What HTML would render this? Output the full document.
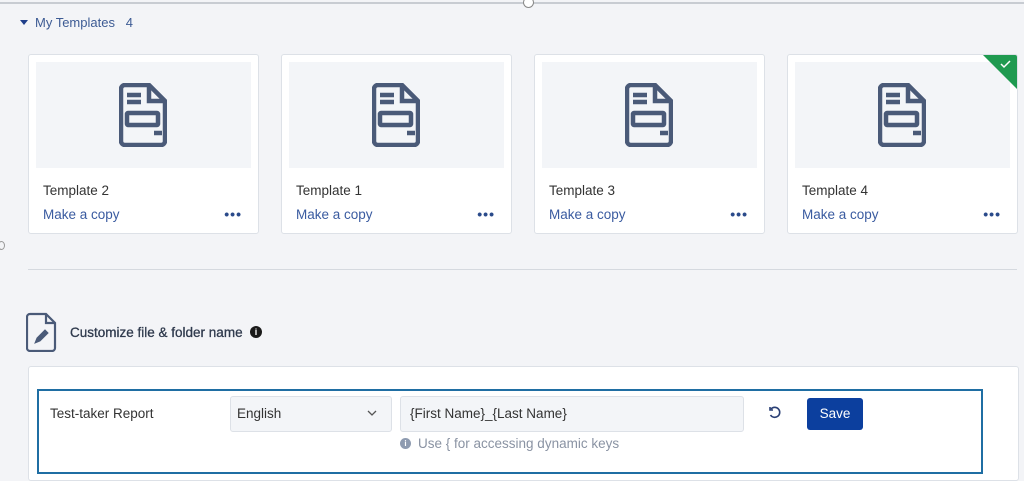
<!DOCTYPE html>
<html><head><style>
body{margin:0;width:1024px;height:479px;background:#f3f4f7;font-family:"Liberation Sans",sans-serif;position:relative;overflow:hidden}
.a{position:absolute}
.card{position:absolute;top:54px;width:229px;height:178px;background:#fff;border:1px solid #dde1e7;border-radius:3px;overflow:hidden}
.img{position:absolute;left:7px;top:7px;width:215px;height:106px;background:#f3f5f8}
.img svg{position:absolute;left:83px;top:21px}
.t{position:absolute;left:14px;top:128px;font-size:13.5px;color:#333}
.l{position:absolute;left:14px;top:152px;font-size:13.5px;color:#3a5ba0}
.d{position:absolute;right:16px;top:151px;font-size:14px;color:#2a4a8a;font-weight:bold;letter-spacing:1px}
</style></head><body>
<div class="a" style="left:0;top:2px;width:1024px;height:2px;background:#c8ccd2"></div>
<div class="a" style="left:523px;top:-3px;width:9px;height:9px;border:1.5px solid #888;border-radius:50%;background:#fff"></div>
<div class="a" style="left:20px;top:20px;width:0;height:0;border-left:4px solid transparent;border-right:4px solid transparent;border-top:5px solid #1f3f8a"></div>
<div class="a" style="left:35px;top:15px;font-size:13px;color:#3d5b94">My Templates &nbsp; 4</div>

<div class="card" style="left:28px"><div class="img"><svg width="48" height="64" viewBox="0 0 48 64" fill="none" stroke="#4a5a78" stroke-width="4.5"><path d="M6 2h24l16 16v40a4 4 0 0 1-4 4H6a4 4 0 0 1-4-4V6a4 4 0 0 1 4-4z" stroke-linejoin="round"/><path d="M30 2v16h16"/><path d="M8 12h14M8 19h14M35 50h8"/><rect x="8" y="30" width="31" height="12" rx="1"/></svg></div><div class="t">Template 2</div><div class="l">Make a copy</div><div class="d">•••</div></div>
<div class="card" style="left:281px"><div class="img"><svg width="48" height="64" viewBox="0 0 48 64" fill="none" stroke="#4a5a78" stroke-width="4.5"><path d="M6 2h24l16 16v40a4 4 0 0 1-4 4H6a4 4 0 0 1-4-4V6a4 4 0 0 1 4-4z" stroke-linejoin="round"/><path d="M30 2v16h16"/><path d="M8 12h14M8 19h14M35 50h8"/><rect x="8" y="30" width="31" height="12" rx="1"/></svg></div><div class="t">Template 1</div><div class="l">Make a copy</div><div class="d">•••</div></div>
<div class="card" style="left:534px"><div class="img"><svg width="48" height="64" viewBox="0 0 48 64" fill="none" stroke="#4a5a78" stroke-width="4.5"><path d="M6 2h24l16 16v40a4 4 0 0 1-4 4H6a4 4 0 0 1-4-4V6a4 4 0 0 1 4-4z" stroke-linejoin="round"/><path d="M30 2v16h16"/><path d="M8 12h14M8 19h14M35 50h8"/><rect x="8" y="30" width="31" height="12" rx="1"/></svg></div><div class="t">Template 3</div><div class="l">Make a copy</div><div class="d">•••</div></div>
<div class="card" style="left:787px"><div class="img"><svg width="48" height="64" viewBox="0 0 48 64" fill="none" stroke="#4a5a78" stroke-width="4.5"><path d="M6 2h24l16 16v40a4 4 0 0 1-4 4H6a4 4 0 0 1-4-4V6a4 4 0 0 1 4-4z" stroke-linejoin="round"/><path d="M30 2v16h16"/><path d="M8 12h14M8 19h14M35 50h8"/><rect x="8" y="30" width="31" height="12" rx="1"/></svg></div><div class="t">Template 4</div><div class="l">Make a copy</div><div class="d">•••</div>
<svg class="a" style="right:0;top:0" width="34" height="34"><path d="M0 0h34v34z" fill="#1f9a50"/><path d="M18 9l3 3 6-6" stroke="#fff" stroke-width="1.5" fill="none"/></svg></div>

<div class="a" style="left:-2px;top:241px;width:5px;height:7px;border-radius:50%;border:1px solid #999"></div>
<div class="a" style="left:28px;top:269px;width:989px;height:1px;background:#d5d9df"></div>

<svg class="a" style="left:26px;top:312px" width="31" height="40" viewBox="0 0 31 40" fill="none" stroke="#4a5a78" stroke-width="2.2"><path d="M4 2h16l9 9v25a3 3 0 0 1-3 3H4a3 3 0 0 1-3-3V5a3 3 0 0 1 3-3z"/><path d="M20 2v9h9"/><path d="M9 31l2-5 8-8 3 3-8 8z" fill="#4a5a78" stroke-width="1"/></svg>
<div class="a" style="left:70px;top:325px;font-size:13.5px;color:#2f3a4d;-webkit-text-stroke:0.3px #2f3a4d">Customize file &amp; folder name</div>
<div class="a" style="left:250px;top:326px;width:12px;height:12px;border-radius:50%;background:#1a1a1a;color:#fff;font-size:9px;font-weight:bold;text-align:center;line-height:12px">i</div>

<div class="a" style="left:28px;top:366px;width:989px;height:113px;background:#fff;border:1px solid #dde1e7;border-radius:3px"></div>
<div class="a" style="left:37px;top:389px;width:942px;height:81px;border:2px solid #1f6ea3"></div>
<div class="a" style="left:50px;top:406px;font-size:13.5px;color:#333">Test-taker Report</div>
<div class="a" style="left:230px;top:396px;width:160px;height:34px;background:#f3f5f8;border:1px solid #dde1e7;border-radius:3px"></div>
<div class="a" style="left:237px;top:406px;font-size:13.5px;color:#333">English</div>
<svg class="a" style="left:367px;top:410px" width="10" height="7"><path d="M1 1l4 4 4-4" stroke="#555" stroke-width="1.3" fill="none"/></svg>
<div class="a" style="left:400px;top:396px;width:342px;height:34px;background:#f3f5f8;border:1px solid #dde1e7;border-radius:3px"></div>
<div class="a" style="left:410px;top:406px;font-size:13.5px;color:#333">{First Name}_{Last Name}</div>
<div class="a" style="left:400px;top:438px;width:11px;height:11px;border-radius:50%;background:#8e9bb0;color:#fff;font-size:8px;font-weight:bold;text-align:center;line-height:11px">i</div>
<div class="a" style="left:418px;top:436px;font-size:13.5px;color:#8a93a3">Use { for accessing dynamic keys</div>
<svg class="a" style="left:767px;top:405px" width="16" height="16" viewBox="0 0 16 16" fill="none" stroke="#2a3f75" stroke-width="1.6"><path d="M4 4A5 5 0 1 1 3.5 10"/><path d="M3 2v3h3"/></svg>
<div class="a" style="left:807px;top:398px;width:56px;height:32px;background:#0c3f9e;border-radius:3px;color:#fff;font-size:13.5px;text-align:center;line-height:32px">Save</div>
</body></html>
